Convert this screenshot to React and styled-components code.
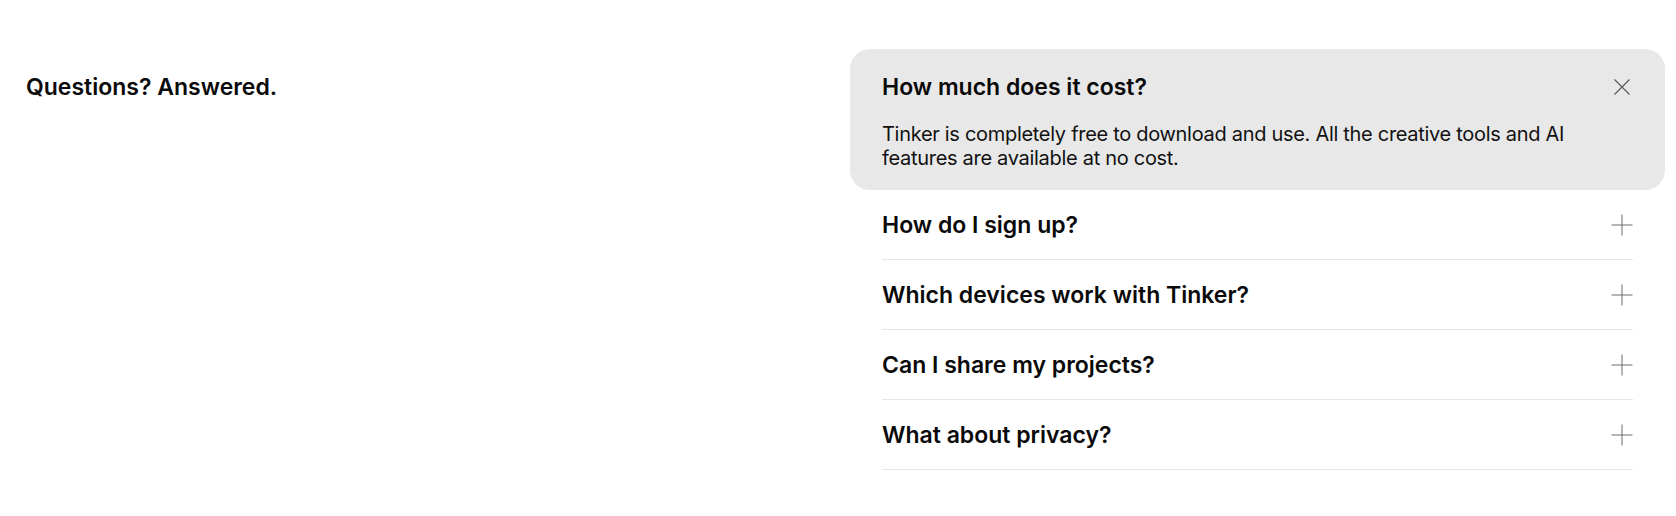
import { useState } from 'react';
import styled, { createGlobalStyle } from 'styled-components';

const GlobalStyle = createGlobalStyle`
    html, body {
        margin: 0;
        padding: 0;
        background: #ffffff;
    }
    body {
        font-family: Inter, 'Noto Sans', sans-serif;
        color: #0a0a0a;
        -webkit-font-smoothing: antialiased;
    }
`;

const faqs = [
    {
        q: 'How much does it cost?',
        a: 'Tinker is completely free to download and use. All the creative tools and AI features are available at no cost.',
    },
    {
        q: 'How do I sign up?',
        a: 'Download the app and create an account with your email address.',
    },
    {
        q: 'Which devices work with Tinker?',
        a: 'Tinker runs on iPhone, iPad and Mac.',
    },
    {
        q: 'Can I share my projects?',
        a: 'Yes, you can share any project with a link.',
    },
    {
        q: 'What about privacy?',
        a: 'Your projects stay private unless you choose to share them.',
    },
];

const CloseIcon = () => (
    <svg width="18" height="18" viewBox="0 0 18 18" fill="none">
        <path d="M1.5 1.5L16.5 16.5M16.5 1.5L1.5 16.5" stroke="#555" strokeWidth="1.1" />
    </svg>
);

const PlusIcon = () => (
    <svg width="22" height="22" viewBox="0 0 22 22" fill="none">
        <path d="M11 0.5V21.5M0.5 11H21.5" stroke="#6a6a6a" strokeWidth="1" />
    </svg>
);

const App = () => {
    const [open, setOpen] = useState(0);

    return (
        <>
            <GlobalStyle />
            <Section>
                <Heading>Questions? Answered.</Heading>
                <List>
                    {faqs.map((item, i) => {
                        const isOpen = open === i;
                        return (
                            <Item key={item.q} $open={isOpen}>
                                <Question onClick={() => setOpen(isOpen ? -1 : i)} $open={isOpen}>
                                    <span>{item.q}</span>
                                    <IconWrap>{isOpen ? <CloseIcon /> : <PlusIcon />}</IconWrap>
                                </Question>
                                {isOpen && <Answer>{item.a}</Answer>}
                            </Item>
                        );
                    })}
                </List>
            </Section>
        </>
    );
};

export default App;

const Section = styled.section`
    display: grid;
    grid-template-columns: 1fr 815px;
    align-items: start;
    padding: 49px 11px 40px 26px;
`;

const Heading = styled.h2`
    margin: 0;
    padding-top: 24px;
    font-size: 23px;
    line-height: 28px;
    font-weight: 600;
    letter-spacing: 0;
`;

const List = styled.div`
    display: flex;
    flex-direction: column;
`;

const Item = styled.div`
    padding: 0 32px;
    border-radius: ${(p) => (p.$open ? '20px' : '0')};
    background: ${(p) => (p.$open ? '#e8e8e8' : 'transparent')};
    padding-bottom: ${(p) => (p.$open ? '20px' : '0')};

    &::after {
        content: '';
        display: ${(p) => (p.$open ? 'none' : 'block')};
        height: 1px;
        background: #e6e6e6;
    }
`;

const Question = styled.button`
    display: flex;
    width: 100%;
    align-items: center;
    justify-content: space-between;
    padding: ${(p) => (p.$open ? '24px 0 21px' : '21px 0 20px')};
    border: 0;
    background: none;
    cursor: pointer;
    font-family: inherit;
    font-size: 23px;
    line-height: 28px;
    font-weight: 600;
    color: #0a0a0a;
    text-align: left;
    letter-spacing: 0;
`;

const IconWrap = styled.span`
    display: flex;
    align-items: center;
    justify-content: center;
    width: 22px;
    height: 22px;
`;

const Answer = styled.p`
    margin: 0;
    max-width: 720px;
    font-size: 20px;
    line-height: 24px;
    font-weight: 400;
    letter-spacing: -0.015em;
    color: #111;
`;
